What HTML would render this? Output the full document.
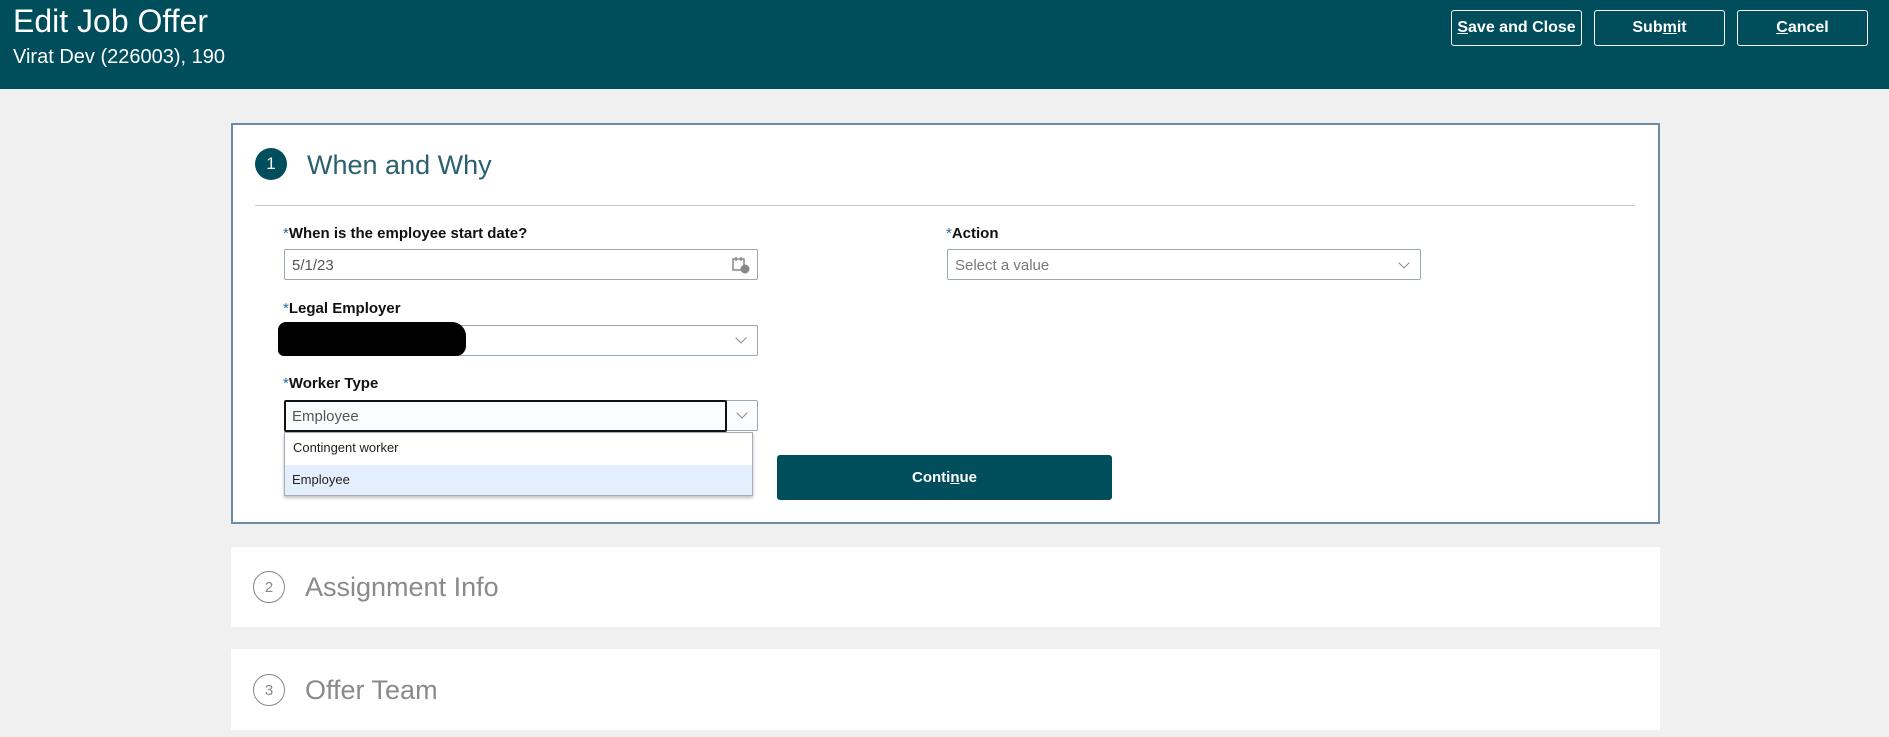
<!DOCTYPE html>
<html><head><meta charset="utf-8"><style>
*{box-sizing:border-box;margin:0;padding:0}
body{width:1889px;height:737px;background:#f0f0f0;font-family:"Liberation Sans",sans-serif;position:relative;overflow:hidden}
.abs{position:absolute}
.hdr{left:0;top:0;width:1889px;height:89px;background:#004d5c}
.btn{position:absolute;top:10px;height:36px;border:1px solid #fff;border-radius:3px;color:#fff;font-weight:bold;font-size:16px;display:flex;align-items:center;justify-content:center}
.card{position:absolute;left:231px;width:1429px;background:#fff}
.lbl{position:absolute;font-size:15px;font-weight:bold;color:#111}
.lbl b{color:#2a6aa0;font-weight:normal}
.inp{position:absolute;height:31px;border:1px solid #9aa8b5;border-radius:2px;background:#fff;font-size:15px;color:#555;padding:7px 7px}
.chev{position:absolute;width:8px;height:8px;border-right:1.5px solid #888;border-bottom:1.5px solid #888;transform:rotate(45deg)}
.circ{position:absolute;width:32px;height:32px;border-radius:50%;display:flex;align-items:center;justify-content:center;font-size:17px}
.ttl{position:absolute;font-size:27px}
</style></head><body>
<div class="abs hdr"></div>
<div class="abs" style="left:13px;top:3px;font-size:32px;color:#fff">Edit Job Offer</div>
<div class="abs" style="left:13px;top:46px;font-size:20px;color:#fff">Virat Dev (226003), 190</div>
<div class="btn" style="left:1451px;width:131px"><span><u>S</u>ave and Close</span></div>
<div class="btn" style="left:1594px;width:131px"><span>Sub<u>m</u>it</span></div>
<div class="btn" style="left:1737px;width:131px"><span><u>C</u>ancel</span></div>

<div class="card" style="top:123px;height:401px;border:2px solid #6a8ca5"></div>
<div class="circ" style="left:255px;top:148px;background:#004d5c;color:#fff">1</div>
<div class="ttl" style="left:307px;top:150px;color:#2c5f70">When and Why</div>
<div class="abs" style="left:255px;top:205px;width:1380px;height:1px;background:#ccc"></div>

<div class="lbl" style="left:283px;top:225px"><b>*</b>When is the employee start date?</div>
<div class="inp" style="left:284px;top:249px;width:474px">5/1/23</div>
<svg class="abs" style="left:732px;top:256px" width="18" height="18" viewBox="0 0 18 18"><rect x="1" y="3" width="11" height="11" fill="none" stroke="#888" stroke-width="1.5"/><line x1="4" y1="1" x2="4" y2="5" stroke="#888" stroke-width="1.5"/><line x1="9" y1="1" x2="9" y2="5" stroke="#888" stroke-width="1.5"/><circle cx="13" cy="13" r="4.5" fill="#888"/></svg>

<div class="lbl" style="left:946px;top:225px"><b>*</b>Action</div>
<div class="inp" style="left:947px;top:249px;width:474px;color:#777">Select a value</div>
<div class="chev" style="left:1400px;top:259px"></div>

<div class="lbl" style="left:283px;top:300px"><b>*</b>Legal Employer</div>
<div class="inp" style="left:284px;top:325px;width:474px"></div>
<div class="chev" style="left:737px;top:334px"></div>
<div class="abs" style="left:278px;top:322px;width:188px;height:34px;background:#000;border-radius:8px 14px 10px 6px"></div>

<div class="lbl" style="left:283px;top:375px"><b>*</b>Worker Type</div>
<div class="inp" style="left:284px;top:400px;width:474px;background:#fafcff"></div>
<div class="abs" style="left:284px;top:400px;width:443px;height:32px;border:2px solid #111;border-radius:2px;background:#fafcff;font-size:15px;color:#555;padding:6px 6px">Employee</div>
<div class="chev" style="left:738px;top:409px"></div>
<div class="abs" style="left:284px;top:432px;width:469px;height:64px;background:#fff;border:1px solid #aab;box-shadow:0 2px 3px rgba(0,0,0,.25)"></div>
<div class="abs" style="left:285px;top:465px;width:467px;height:30px;background:#e3effc"></div>
<div class="abs" style="left:293px;top:440px;font-size:13px;color:#222">Contingent worker</div>
<div class="abs" style="left:292px;top:472px;font-size:13px;color:#222">Employee</div>
<div class="abs" style="left:777px;top:455px;width:335px;height:45px;background:#004d5c;border-radius:3px;color:#fff;font-weight:bold;font-size:15px;display:flex;align-items:center;justify-content:center"><span>Conti<u>n</u>ue</span></div>

<div class="card" style="top:547px;height:80px"></div>
<div class="circ" style="left:253px;top:571px;border:1.5px solid #888;color:#888;font-size:15px">2</div>
<div class="ttl" style="left:305px;top:572px;color:#8a8a8a">Assignment Info</div>

<div class="card" style="top:649px;height:81px"></div>
<div class="circ" style="left:253px;top:674px;border:1.5px solid #888;color:#888;font-size:15px">3</div>
<div class="ttl" style="left:305px;top:675px;color:#8a8a8a">Offer Team</div>
</body></html>
